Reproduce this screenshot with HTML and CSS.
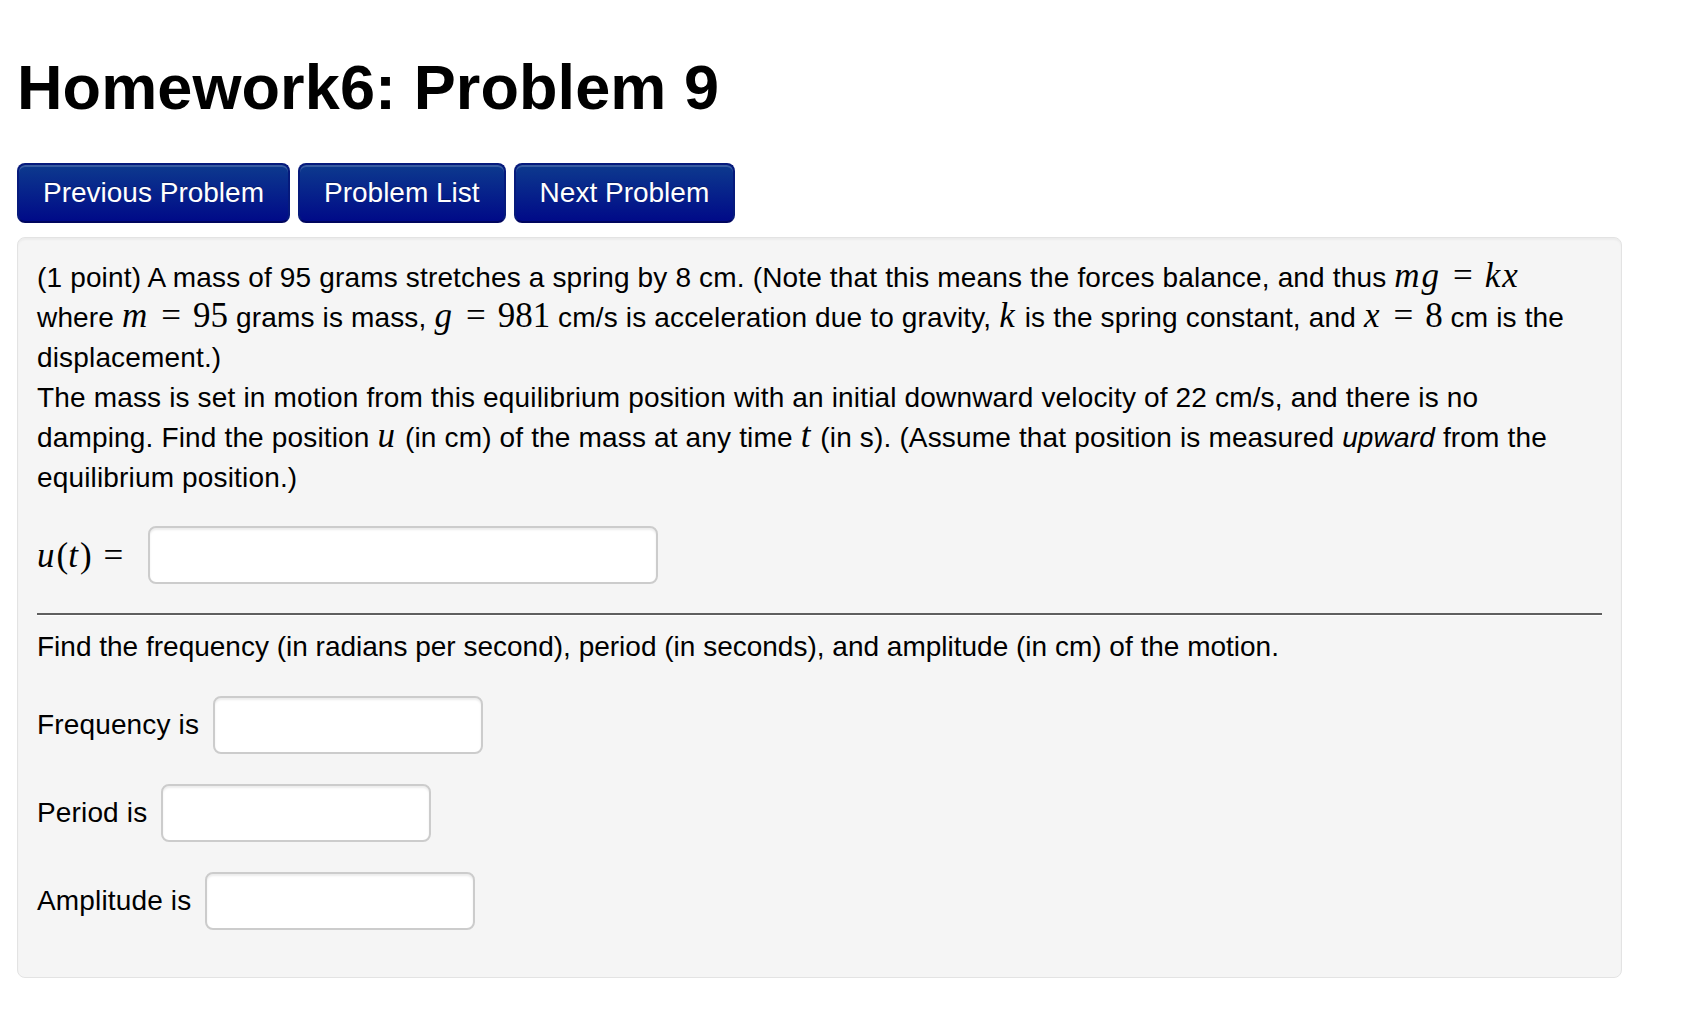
FILE: index.html
```html
<!DOCTYPE html>
<html lang="en">
<head>
  <meta charset="UTF-8">
  <meta name="viewport" content="width=device-width, initial-scale=1.0">
  <title>Homework6: Problem 9</title>
  <link rel="stylesheet" href="styles.css">
</head>

<body>
  <div class="page">
    <h1 class="title">Homework6: Problem 9</h1>

    <div class="nav">
      <a href="#" class="nav-button">Previous Problem</a>
      <a href="#" class="nav-button">Problem List</a>
      <a href="#" class="nav-button">Next Problem</a>
    </div>

    <div class="problem">
      <p class="problem-text intro">
        (1 point) A mass of 95 grams stretches a spring by 8 cm. (Note that this means the forces balance, and thus <span class="math"><i>m</i><i>g</i><span class="rel">=</span><i>k</i><i>x</i></span><br>
        where <span class="math"><i>m</i><span class="rel">=</span>95</span> grams is mass, <span class="math"><i>g</i><span class="rel">=</span>981</span> cm/s is acceleration due to gravity, <span class="math"><i>k</i></span> is the spring constant, and <span class="math"><i>x</i><span class="rel">=</span>8</span> cm is the<br>
        displacement.)<br>
        The mass is set in motion from this equilibrium position with an initial downward velocity of 22 cm/s, and there is no<br>
        damping. Find the position <span class="math"><i>u</i></span> (in cm) of the mass at any time <span class="math"><i>t</i></span> (in s). (Assume that position is measured <em>upward</em> from the<br>
        equilibrium position.)
      </p>

      <div class="answer-row">
        <span class="math"><i>u</i>(<i>t</i>)<span class="rel">=</span></span>
        <input type="text" class="answer answer-wide">
      </div>

      <hr class="divider">

      <p class="problem-text">Find the frequency (in radians per second), period (in seconds), and amplitude (in cm) of the motion.</p>

      <div class="answer-list">
        <div class="answer-row">Frequency is <input type="text" class="answer"></div>
        <div class="answer-row">Period is <input type="text" class="answer"></div>
        <div class="answer-row">Amplitude is <input type="text" class="answer"></div>
      </div>
    </div>
  </div>
</body>
</html>
```

FILE: styles.css
```css
body {
  margin: 0;
  background: #ffffff;
  color: #000000;
  font-family: "Liberation Sans", Arial, Helvetica, sans-serif;
  font-size: 28px;
  line-height: 40px;
}
.page {
  padding: 0 17px;
}
.title {
  margin: 47px 0 36px;
  font-size: 63px;
  line-height: 80px;
  font-weight: bold;
  letter-spacing: 0.1px;
}
.nav {
  display: flex;
  gap: 8px;
}
.nav-button {
  display: inline-block;
  padding: 8px 24px;
  color: white;
  font-size: 28px;
  line-height: 40px;
  text-decoration: none;
  background: linear-gradient(to bottom, #0d3a8e, #000a88);
  border: 2px solid #061a7c;
  border-bottom-color: #00065e;
  border-radius: 8px;
  box-shadow: inset 0 2px 0 rgba(255, 255, 255, 0.18);
  text-shadow: 0 -1px 0 rgba(0, 0, 0, 0.25);
}
.problem {
  width: 1605px;
  box-sizing: border-box;
  margin-top: 14px;
  padding: 20px 19px;
  background: #f5f5f5;
  border: 1px solid #e3e3e3;
  border-radius: 8px;
  box-shadow: inset 0 2px 2px rgba(0, 0, 0, 0.04);
  letter-spacing: 0.15px;
}
.problem-text {
  margin: 0;
  white-space: nowrap;
  letter-spacing: 0;
}
.problem-text.intro {
  letter-spacing: 0.16px;
}
.math {
  font-family: "Liberation Serif", "Times New Roman", serif;
  font-size: 35px;
  line-height: 1;
  letter-spacing: 0;
}
.math i {
  padding-right: 2px;
}
.rel {
  margin: 0 12px;
}
.answer-row {
  display: flex;
  align-items: center;
  margin-top: 28px;
  white-space: pre;
}
.answer-row .math {
  margin-right: 13px;
}
.answer {
  width: 270px;
  height: 58px;
  box-sizing: border-box;
  margin-left: 6px;
  padding: 8px 12px;
  font-size: 28px;
  background: white;
  border: 2px solid #cccccc;
  border-radius: 8px;
  box-shadow: inset 0 2px 2px rgba(0, 0, 0, 0.075);
}
.answer-wide {
  width: 510px;
  margin-left: 0;
}
.divider {
  margin: 29px 0 11px;
  border: 0;
  border-top: 2px solid #5f5f5f;
  border-bottom: 1px solid #ffffff;
}
.answer-list {
  display: flex;
  flex-direction: column;
  gap: 30px;
  margin: 29px 0 27px;
}
.answer-list .answer-row {
  margin-top: 0;
}
```
